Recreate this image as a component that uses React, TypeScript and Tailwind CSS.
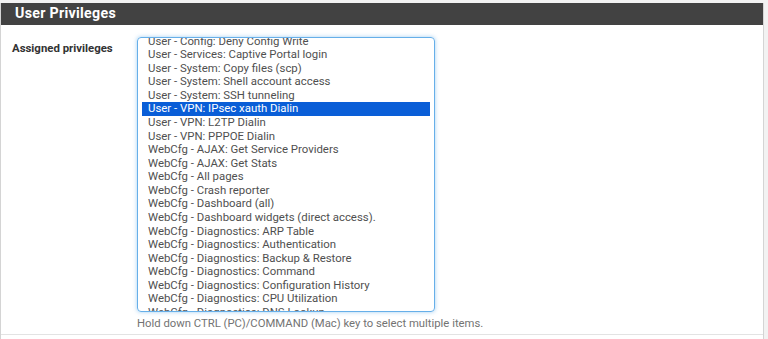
import React from "react";

const privileges = [
  "User - Config: Deny Config Write",
  "User - Services: Captive Portal login",
  "User - System: Copy files (scp)",
  "User - System: Shell account access",
  "User - System: SSH tunneling",
  "User - VPN: IPsec xauth Dialin",
  "User - VPN: L2TP Dialin",
  "User - VPN: PPPOE Dialin",
  "WebCfg - AJAX: Get Service Providers",
  "WebCfg - AJAX: Get Stats",
  "WebCfg - All pages",
  "WebCfg - Crash reporter",
  "WebCfg - Dashboard (all)",
  "WebCfg - Dashboard widgets (direct access).",
  "WebCfg - Diagnostics: ARP Table",
  "WebCfg - Diagnostics: Authentication",
  "WebCfg - Diagnostics: Backup & Restore",
  "WebCfg - Diagnostics: Command",
  "WebCfg - Diagnostics: Configuration History",
  "WebCfg - Diagnostics: CPU Utilization",
  "WebCfg - Diagnostics: DNS Lookup",
];

const selected = "User - VPN: IPsec xauth Dialin";

export default function App() {
  return (
    <div
      className="w-[768px] h-[339px] bg-[#f2f2f2] pt-[3px] pr-[4px] overflow-hidden"
      style={{ fontFamily: "Roboto, 'Liberation Sans', sans-serif" }}
    >
      <div className="bg-white border-l border-r border-[#d4d4d4] h-full">
        {/* Panel heading */}
        <div className="h-[22px] bg-[#424242] flex items-center px-[14px]">
          <h2 className="text-white font-bold text-[14.2px] tracking-[0.3px]">User Privileges</h2>
        </div>

        {/* Form row */}
        <div className="flex border-b border-[#e3e3e3] pt-[12px] h-[310px]">
          <label className="w-[136px] shrink-0 pl-[11px] pt-[3px] text-[11.4px] font-bold text-[#333]">
            Assigned privileges
          </label>

          <div className="flex flex-col">
            <div className="w-[298px] h-[275px] border border-[#66afe9] rounded-[4px] shadow-[0_0_4px_rgba(102,175,233,0.6)] overflow-hidden px-[4px]">
              <ul className="-mt-[3.5px]">
                {privileges.map((p) => (
                  <li
                    key={p}
                    className={`h-[13.58px] leading-[13.58px] px-[6px] text-[11.4px] whitespace-nowrap ${
                      p === selected ? "bg-[#0a5ed7] text-white" : "text-[#505050]"
                    }`}
                  >
                    {p}
                  </li>
                ))}
              </ul>
            </div>
            <p className="mt-[4px] text-[11.3px] text-[#737373]">
              Hold down CTRL (PC)/COMMAND (Mac) key to select multiple items.
            </p>
          </div>
        </div>
      </div>
    </div>
  );
}
